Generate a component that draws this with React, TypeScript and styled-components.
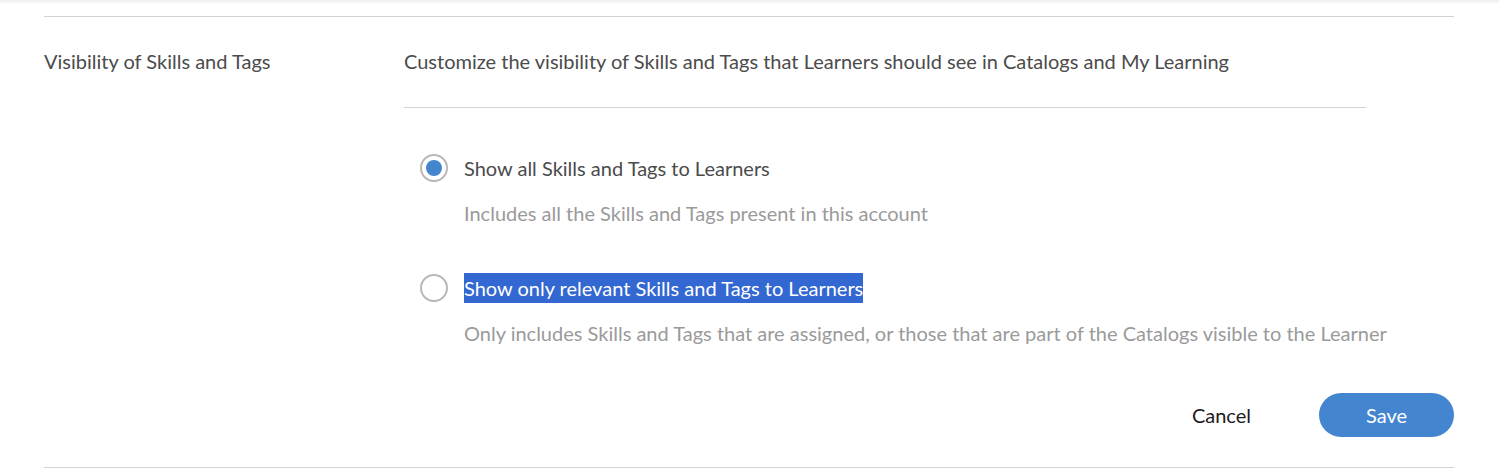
import React from "react";
import styled, { createGlobalStyle } from "styled-components";

const Global = createGlobalStyle`
  html, body { margin: 0; padding: 0; background: #ffffff; }
  body { font-family: Lato, "Noto Sans", sans-serif; }
`;

const TopShadow = styled.div`
  height: 4px;
  background: linear-gradient(to bottom, #ececec, #ffffff);
`;

const Section = styled.section`
  margin: 12px 45px 0 44px;
  border-top: 1px solid #d3d3d3;
  border-bottom: 1px solid #d3d3d3;
`;

const Row = styled.div`
  display: grid;
  grid-template-columns: 360px 1fr;
  padding-top: 32px;
`;

const Label = styled.div`
  font-size: 20px;
  line-height: 24px;
  color: #4b4b4b;
`;

const Content = styled.div`
  display: flex;
  flex-direction: column;
`;

const Description = styled.div`
  width: 962px;
  font-size: 20px;
  line-height: 24px;
  color: #4b4b4b;
  padding-bottom: 34px;
  border-bottom: 1px solid #d3d3d3;
`;

const Options = styled.div`
  display: flex;
  flex-direction: column;
  padding: 45px 0 0 16px;
`;

const Option = styled.label<{ $first?: boolean }>`
  display: flex;
  align-items: center;
  gap: 16px;
  margin-top: ${(p) => (p.$first ? "0" : "48px")};
  cursor: pointer;
`;

const Radio = styled.span<{ $checked?: boolean }>`
  box-sizing: border-box;
  width: 28px;
  height: 28px;
  border-radius: 50%;
  border: 2px solid #b8b8b8;
  display: flex;
  align-items: center;
  justify-content: center;
  flex: none;
  &::after {
    content: "";
    width: 16px;
    height: 16px;
    border-radius: 50%;
    background: ${(p) => (p.$checked ? "#4485d0" : "transparent")};
  }
`;

const OptionText = styled.span<{ $selected?: boolean }>`
  font-size: 20px;
  line-height: 30px;
  color: ${(p) => (p.$selected ? "#ffffff" : "#4b4b4b")};
  background: ${(p) => (p.$selected ? "#3367d1" : "transparent")};
`;

const Hint = styled.div`
  margin: 18px 0 0 44px;
  font-size: 20px;
  line-height: 24px;
  color: #9a9a9a;
`;

const Actions = styled.div`
  display: flex;
  justify-content: flex-end;
  align-items: center;
  gap: 44px;
  margin-top: 48px;
  padding-bottom: 30px;
`;

const CancelButton = styled.button`
  border: none;
  background: none;
  font-family: inherit;
  font-size: 20px;
  color: #1c1c1c;
  padding: 0 24px;
  height: 44px;
  cursor: pointer;
`;

const SaveButton = styled.button`
  border: none;
  background: #4485d0;
  color: #ffffff;
  font-family: inherit;
  font-size: 20px;
  width: 135px;
  height: 44px;
  border-radius: 22px;
  cursor: pointer;
`;

export default function App() {
  return (
    <>
      <Global />
      <TopShadow />
      <Section>
        <Row>
          <Label>Visibility of Skills and Tags</Label>
          <Content>
            <Description>
              Customize the visibility of Skills and Tags that Learners should see in Catalogs and My Learning
            </Description>
            <Options>
              <Option $first>
                <Radio $checked />
                <OptionText>Show all Skills and Tags to Learners</OptionText>
              </Option>
              <Hint>Includes all the Skills and Tags present in this account</Hint>
              <Option>
                <Radio />
                <OptionText $selected>Show only relevant Skills and Tags to Learners</OptionText>
              </Option>
              <Hint>
                Only includes Skills and Tags that are assigned, or those that are part of the Catalogs visible to the Learner
              </Hint>
            </Options>
          </Content>
        </Row>
        <Actions>
          <CancelButton>Cancel</CancelButton>
          <SaveButton>Save</SaveButton>
        </Actions>
      </Section>
    </>
  );
}
